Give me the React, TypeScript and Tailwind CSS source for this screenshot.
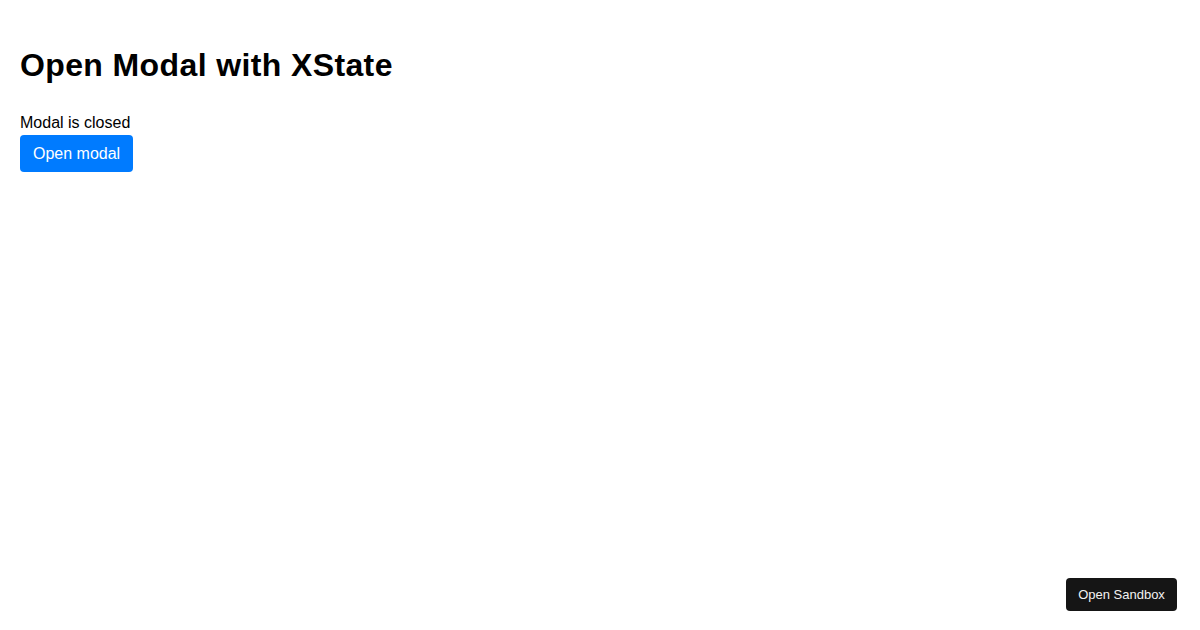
import React from "react";

export default function App() {
  return (
    <div className="min-h-[630px] bg-white px-[20px] text-black" style={{ fontFamily: '"Liberation Sans", Arial, sans-serif' }}>
      <h1 className="pt-[46px] text-[32px] font-bold leading-[38px] tracking-[0.38px]">Open Modal with XState</h1>
      <div className="mt-[27px] text-[16px] leading-[24px]">Modal is closed</div>
      <button className="h-[37px] rounded-[4px] bg-[#007bff] px-[13px] text-[16px] leading-[24px] text-white">
        Open modal
      </button>
      <button className="fixed bottom-[19px] right-[23px] h-[33px] w-[111px] rounded-[4px] bg-[#151515] text-[13px] text-[#f2f2f2]">
        Open Sandbox
      </button>
    </div>
  );
}
